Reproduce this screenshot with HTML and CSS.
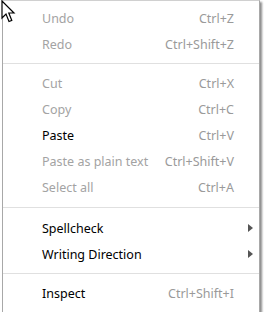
FILE: index.html
```html
<!DOCTYPE html>
<html lang="en">
<head>
    <meta charset="UTF-8">
    <title>Context Menu</title>
    <link rel="stylesheet" href="styles.css">
</head>
<body>
    <div class="menu">
        <div class="item disabled"><span class="label">Undo</span><span class="key">Ctrl+Z</span></div>
        <div class="item disabled"><span class="label">Redo</span><span class="key">Ctrl+Shift+Z</span></div>
        <div class="separator"></div>
        <div class="item disabled"><span class="label">Cut</span><span class="key">Ctrl+X</span></div>
        <div class="item disabled"><span class="label">Copy</span><span class="key">Ctrl+C</span></div>
        <div class="item"><span class="label">Paste</span><span class="key">Ctrl+V</span></div>
        <div class="item disabled"><span class="label">Paste as plain text</span><span class="key">Ctrl+Shift+V</span></div>
        <div class="item disabled"><span class="label">Select all</span><span class="key">Ctrl+A</span></div>
        <div class="separator wide"></div>
        <div class="item submenu"><span class="label">Spellcheck</span><span class="arrow"></span></div>
        <div class="item submenu"><span class="label">Writing Direction</span><span class="arrow"></span></div>
        <div class="separator"></div>
        <div class="item"><span class="label">Inspect</span><span class="key">Ctrl+Shift+I</span></div>
    </div>

    <svg class="cursor" width="15" height="23" viewBox="0 0 15 23">
        <path d="M1 1 L1 18 L5 14 L8 21.5 L10.8 20.4 L7.8 13 L13 13 Z" fill="#fff" stroke="#000" stroke-width="1.2" stroke-linejoin="miter"/>
    </svg>
</body>
</html>
```

FILE: styles.css
```css
body {
    margin: 0;
    background: #fff;
    font-family: "Noto Sans", "Open Sans", sans-serif;
    font-size: 12.5px;
}
.menu {
    margin-left: 2px;
    width: 256px;
    height: 304px;
    padding: 4px 0 3px 0;
    border: 1px solid #a8a8a8;
    border-top-color: #d0d0d0;
    background: #fff;
    box-shadow: 2px 2px 2px rgba(0,0,0,0.45);
    box-sizing: content-box;
    overflow: hidden;
}
.item {
    display: flex;
    align-items: center;
    height: 26px;
    padding: 0 25px 0 39px;
    color: #000;
}
.item.disabled {
    color: #a3a3a3;
}
.label {
    flex: 1;
    white-space: nowrap;
}
.key {
    color: #9a9a9a;
    white-space: nowrap;
}
.submenu {
    padding-right: 6px;
}
.arrow {
    width: 0;
    height: 0;
    border-top: 4px solid transparent;
    border-bottom: 4px solid transparent;
    border-left: 5px solid #555;
}
.separator {
    height: 1px;
    margin: 6px 0;
    background: #e0e0e0;
}
.separator.wide {
    margin: 7px 0;
}
.cursor {
    position: absolute;
    left: 1px;
    top: 0;
}
```
